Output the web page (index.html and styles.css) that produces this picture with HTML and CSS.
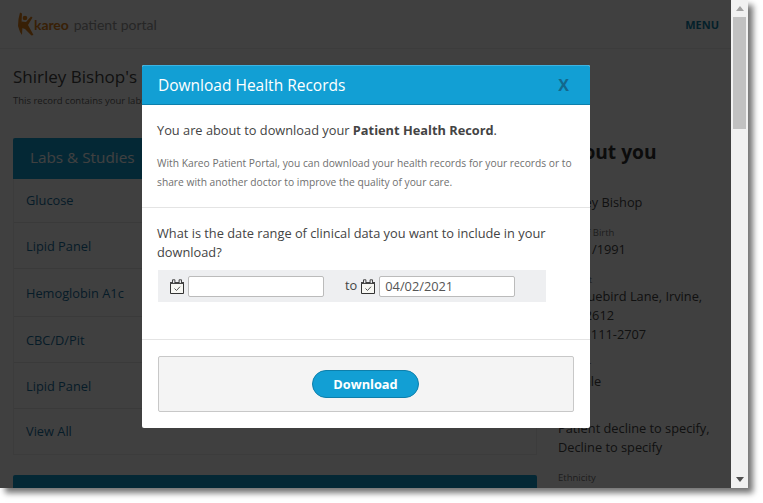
FILE: index.html
```html
<!DOCTYPE html>
<html lang="en">
<head>
<meta charset="utf-8">
<title>Kareo Patient Portal</title>
<link rel="stylesheet" href="styles.css">
</head>
<body>
<div class="window">
  <div class="page">
    <header class="topbar">
      <div class="logo">
        <svg class="logo-mark" viewBox="0 0 17 24" width="17" height="24" aria-hidden="true">
          <path d="M3 .5 L5 1.5 L4.6 9 L5.5 14 L5 23 L3 20 L1 14 L1.5 7 Z" fill="#e07f18"/>
          <circle cx="8" cy="6" r="2.3" fill="#e07f18"/>
          <path d="M4.5 9.5 L9 10 L14 4.5 L15.5 5.5 L11 13 L16.5 23 L14.5 23.5 L8 17 L5 16 Z" fill="#e07f18"/>
        </svg>
        <span class="logo-brand">kareo</span>
        <span class="logo-name">patient portal</span>
      </div>
      <a class="menu">MENU</a>
    </header>
    <main class="content">
      <section class="col-left">
        <h1 class="record-title">Shirley Bishop's</h1>
        <p class="record-note">This record contains your labs</p>
        <div class="card">
          <h2 class="card-head">Labs &amp; Studies</h2>
          <a class="row row-first">Glucose</a>
          <a class="row">Lipid Panel</a>
          <a class="row row-tall">Hemoglobin A1c</a>
          <a class="row">CBC/D/Pit</a>
          <a class="row">Lipid Panel</a>
          <a class="row row-last">View All</a>
        </div>
        <div class="card-next"></div>
      </section>
      <aside class="col-right">
        <h2 class="about-title">About you</h2>
        <p class="value value-name">Shirley Bishop</p>
        <p class="label">Date of Birth</p>
        <p class="value">01/01/1991</p>
        <p class="label">Contact</p>
        <p class="value">12 Bluebird Lane, Irvine,<br>CA 92612<br>(949) 111-2707</p>
        <p class="label">Gender</p>
        <p class="value">Female</p>
        <p class="label">Race</p>
        <p class="value">Patient decline to specify,<br>Decline to specify</p>
        <p class="label">Ethnicity</p>
      </aside>
    </main>
    <div class="overlay"></div>
    <div class="modal">
      <div class="modal-head">
        <span class="modal-title">Download Health Records</span>
        <span class="modal-close">X</span>
      </div>
      <div class="modal-intro">
        <p class="lead">You are about to download your <b>Patient Health Record</b>.</p>
        <p class="fine">With Kareo Patient Portal, you can download your health records for your records or to share with another doctor to improve the quality of your care.</p>
      </div>
      <div class="modal-range">
        <p class="lead question">What is the date range of clinical data you want to include in your download?</p>
        <div class="date-bar">
          <svg class="cal" viewBox="0 0 14 15" width="14" height="15" aria-hidden="true">
            <path d="M.5 3.5h13v11H.5z" fill="#f7f7f3" stroke="#333"/>
            <path d="M0 3h14v2H0z" fill="#444"/>
            <path d="M2.5 .8h2.4v3.6H2.500zM9.100 .8h2.400v3.6H9.100z" fill="#eeeff1" stroke="#333" stroke-width=".9"/>
            <path d="M4.500 9.500l2 2 3.500-3.800" fill="none" stroke="#555"/>
          </svg>
          <input class="date-input" type="text">
          <span class="to">to</span>
          <svg class="cal" viewBox="0 0 14 15" width="14" height="15" aria-hidden="true">
            <path d="M.5 3.5h13v11H.5z" fill="#f7f7f3" stroke="#333"/>
            <path d="M0 3h14v2H0z" fill="#444"/>
            <path d="M2.5 .8h2.4v3.6H2.500zM9.100 .8h2.400v3.6H9.100z" fill="#eeeff1" stroke="#333" stroke-width=".9"/>
            <path d="M4.500 9.500l2 2 3.500-3.800" fill="none" stroke="#555"/>
          </svg>
          <input class="date-input" type="text" value="04/02/2021">
        </div>
      </div>
      <div class="modal-foot">
        <div class="well">
          <button class="download" type="button">Download</button>
        </div>
      </div>
    </div>
  </div>
  <div class="scrollbar">
    <span class="arrow arrow-up"></span>
    <span class="thumb"></span>
    <span class="arrow arrow-down"></span>
  </div>
</div>
</body>
</html>
```
FILE: styles.css
```css
* { box-sizing: border-box; }
html, body { margin: 0; height: 100%; background: #fff; overflow: hidden; }
body { font-family: "Open Sans", "Liberation Sans", sans-serif; color: #333; }
p, h1, h2 { margin: 0; font-weight: 400; }

.window {
  display: flex;
  width: 748px;
  height: 488px;
  box-shadow: 5px 5px 6px rgba(0, 0, 0, .55);
}
.page {
  position: relative;
  flex: 1;
  min-width: 0;
  overflow: hidden;
  background: #fff;
}

.topbar {
  display: flex;
  align-items: center;
  justify-content: space-between;
  height: 49px;
  padding: 0 12px 0 17px;
  border-bottom: 1px solid #f0f0f0;
}
.logo { display: flex; align-items: center; line-height: 20px; }
.logo-mark { flex: none; }
.logo-brand { font: 700 14px "Lato", sans-serif; color: #e07f18; margin: 0 5px 0 0; letter-spacing: -.1px; }
.logo-name { font: 400 14px "Lato", sans-serif; color: #999; }
.menu { font-size: 11px; font-weight: 700; color: #0f7fa8; }

.content { display: flex; padding: 17px 0 0 13px; }
.col-left { width: 524px; flex: none; }
.col-right { padding: 73px 0 0 21px; flex: none; width: 194px; }

.record-title { font-size: 17px; line-height: 22px; white-space: nowrap; color: #444; }
.record-note { font-size: 9.5px; line-height: 14px; margin-top: 6px; white-space: nowrap; color: #666; }

.card { margin-top: 30px; border: 1px solid #eee; border-top: 0; }
.card-head {
  height: 41px;
  margin: 0 -1px;
  padding-left: 17px;
  font-size: 15.3px;
  line-height: 39px;
  color: #fff;
  background: #129fd4;
  border-radius: 2px 2px 0 0;
}
.row {
  display: flex;
  align-items: center;
  height: 46px;
  padding-left: 12px;
  font-size: 12.8px;
  color: #1a6fa0;
  border-bottom: 1px solid #e6e6e6;
}
.row-first { height: 44px; padding-bottom: 2px; }
.row-tall { height: 48px; }
.row-last { border-bottom: 0; height: 45px; padding-bottom: 2px; }
.card-next { height: 40px; margin-top: 20px; background: #129fd4; border-radius: 2px 2px 0 0; }

.about-title { font-size: 19.2px; font-weight: 700; line-height: 26px; white-space: nowrap; }
.value { font-size: 12.8px; line-height: 19px; color: #444; white-space: nowrap; }
.value-name { margin-top: 28px; }
.label { font-size: 9.5px; line-height: 14px; margin-top: 14px; color: #777; }

.overlay { position: absolute; inset: 0; background: rgba(0, 0, 0, .75); }

.modal {
  position: absolute;
  left: 142px;
  top: 65px;
  width: 448px;
  height: 363px;
  background: #fff;
  border-radius: 2px;
}
.modal-head {
  display: flex;
  align-items: center;
  justify-content: space-between;
  height: 40px;
  padding: 0 16px;
  color: #fff;
  background: #129fd4;
  border-top: 1px solid #3cb4e2;
  border-bottom: 1px solid #0d7fab;
  border-radius: 2px 2px 0 0;
}
.modal-title { font-size: 15.5px; }
.modal-close { font-size: 16px; font-weight: 700; color: #13688c; margin-right: 5px; }

.modal-intro { height: 103px; padding: 16px 15px 0; border-bottom: 1px solid #e4e4e4; }
.lead { font-size: 12.8px; line-height: 19px; color: #444; }
.fine { font-size: 10.25px; line-height: 19px; color: #707070; margin-top: 14px; }

.modal-range { height: 132px; padding: 16px 16px 0 15px; border-bottom: 1px solid #e4e4e4; }
.date-bar {
  display: flex;
  align-items: center;
  width: 388px;
  height: 32px;
  margin: 8px 0 0 1px;
  padding-left: 12px;
  background: #eeeff1;
}
.cal { flex: none; margin-right: 4px; }
.date-input {
  width: 136px;
  height: 21px;
  padding: 0 5px;
  font: 12.8px "Open Sans", sans-serif;
  color: #555;
  background: #fff;
  border: 1px solid #bbb;
  border-radius: 2px;
}
.to { margin: 0 4px 2px 21px; font-size: 12.8px; color: #444; }

.modal-foot { padding: 16px; }
.well {
  display: flex;
  align-items: center;
  justify-content: center;
  height: 56px;
  background: #f4f4f4;
  border: 1px solid #c8c8c8;
  border-radius: 2px;
}
.download {
  width: 107px;
  height: 28px;
  margin-right: 1px;
  padding: 0;
  font: 700 12.8px "Open Sans", sans-serif;
  color: #fff;
  background: #129fd4;
  border: 1px solid #0d7fab;
  border-radius: 14px;
}

.scrollbar {
  position: relative;
  display: flex;
  flex-direction: column;
  align-items: center;
  justify-content: space-between;
  flex: none;
  width: 17px;
  padding: 6px 0;
  background: #f1f1f1;
}
.thumb { width: 13px; height: 112px; background: #c1c1c1; position: absolute; top: 17px; left: 2px; }
.arrow { width: 0; height: 0; border-left: 4px solid transparent; border-right: 4px solid transparent; }
.arrow-up { border-bottom: 5px solid #a3a3a3; }
.arrow-down { border-top: 5px solid #505050; }
```
